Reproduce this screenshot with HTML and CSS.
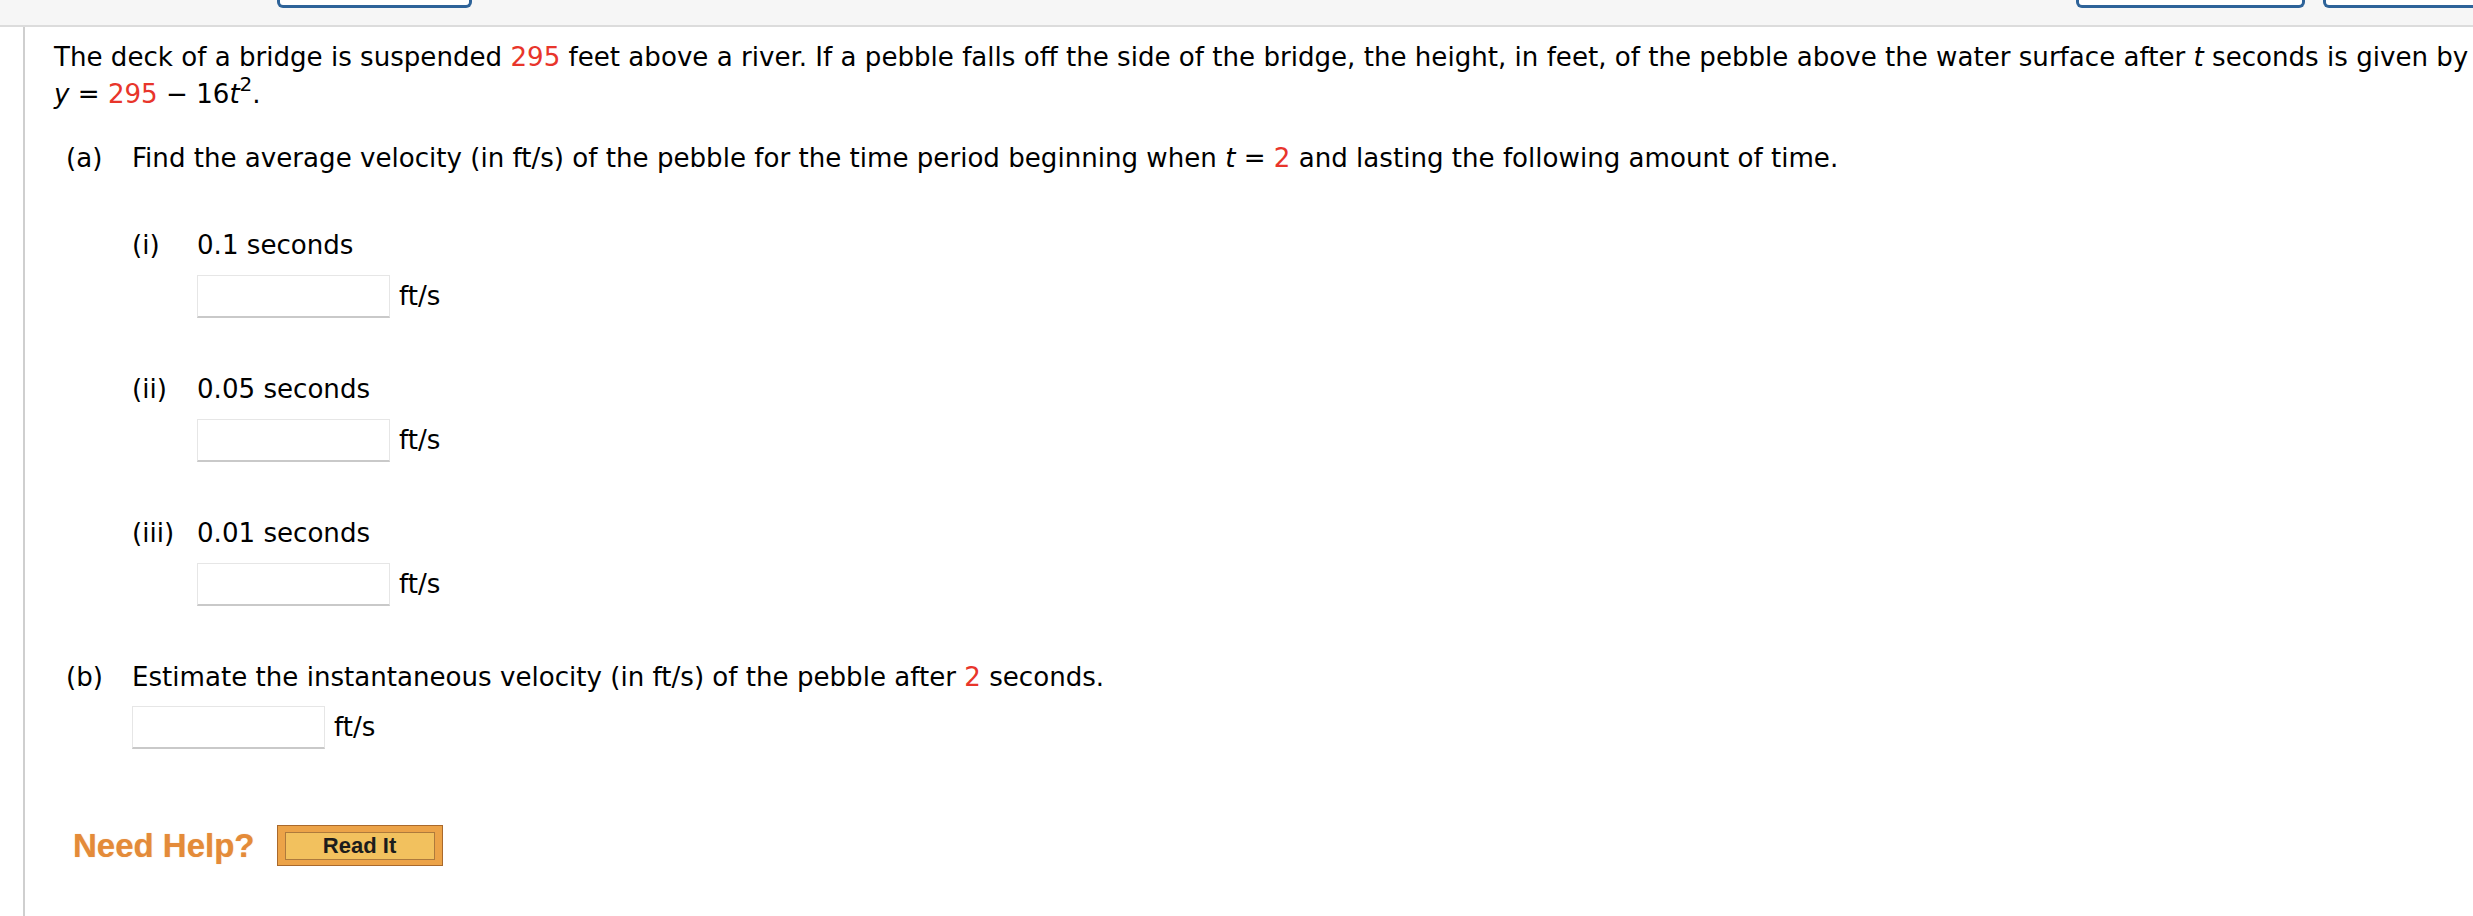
FILE: index.html
```html
<!DOCTYPE html>
<html>
<head>
<meta charset="utf-8">
<link rel="stylesheet" href="styles.css">
</head>
<body>
<div class="topbar">
  <div class="tab tab-1"></div>
  <div class="tab tab-2"></div>
  <div class="tab tab-3"></div>
</div>
<div class="main">
  <p class="stem">The deck of a bridge is suspended <span class="red">295</span> feet above a river. If a pebble falls off the side of the bridge, the height, in feet, of the pebble above the water surface after <i>t</i> seconds is given by<br><i>y</i> = <span class="red">295</span> &minus; 16<i>t</i><sup>2</sup>.</p>

  <div class="part">
    <div class="plabel">(a)</div>
    <div class="pbody">
      <div class="ptext">Find the average velocity (in ft/s) of the pebble for the time period beginning when <i>t</i> = <span class="red">2</span> and lasting the following amount of time.</div>
      <div class="sub first">
        <div class="slabel">(i)</div>
        <div class="sbody">
          <div class="stext">0.1 seconds</div>
          <div class="answer"><span class="box"></span><span class="unit">ft/s</span></div>
        </div>
      </div>
      <div class="sub">
        <div class="slabel">(ii)</div>
        <div class="sbody">
          <div class="stext">0.05 seconds</div>
          <div class="answer"><span class="box"></span><span class="unit">ft/s</span></div>
        </div>
      </div>
      <div class="sub">
        <div class="slabel">(iii)</div>
        <div class="sbody">
          <div class="stext">0.01 seconds</div>
          <div class="answer"><span class="box"></span><span class="unit">ft/s</span></div>
        </div>
      </div>
    </div>
  </div>

  <div class="part part-b">
    <div class="plabel">(b)</div>
    <div class="pbody">
      <div class="ptext">Estimate the instantaneous velocity (in ft/s) of the pebble after <span class="red">2</span> seconds.</div>
      <div class="answer"><span class="box"></span><span class="unit">ft/s</span></div>
    </div>
  </div>

  <div class="help">
    <span class="help-text">Need Help?</span>
    <span class="read-btn"><span class="read-inner">Read It</span></span>
  </div>
</div>
</body>
</html>
```
FILE: styles.css
```css
html, body {
  margin: 0;
  padding: 0;
  background: #ffffff;
}
body {
  font-family: "DejaVu Sans", Verdana, sans-serif;
  font-size: 26.1px;
  color: #000;
  overflow: hidden;
  height: 916px;
}
.topbar {
  height: 25px;
  background: #f6f6f6;
  border-bottom: 2px solid #dcdcdc;
  display: flex;
  align-items: flex-start;
  overflow: hidden;
}
.tab {
  box-sizing: border-box;
  height: 8px;
  border: 3px solid #2e6399;
  border-top: none;
  border-radius: 0 0 6px 6px;
  background: #ffffff;
  flex: none;
}
.tab-1 { margin-left: 277px; width: 195px; }
.tab-2 { margin-left: 1604px; width: 229px; }
.tab-3 { margin-left: 18px; width: 220px; }

.main {
  margin-left: 23px;
  border-left: 2px solid #cfcfcf;
  padding: 12px 0 0 29px;
  height: 877px;
  line-height: 37px;
}
.stem {
  margin: 0;
  white-space: nowrap;
}
.stem sup {
  font-size: 20px;
  line-height: 0;
  vertical-align: 12px;
}
.red { color: #e8352b; }
i { font-style: italic; }

.part {
  display: grid;
  grid-template-columns: 66px 1fr;
  padding-left: 12px;
  margin-top: 27px;
}
.ptext { white-space: nowrap; }
.sub {
  display: grid;
  grid-template-columns: 65px 1fr;
  margin-top: 53px;
}
.sub.first { margin-top: 50px; }
.answer {
  display: flex;
  align-items: center;
  margin-top: 11px;
}
.box {
  display: block;
  box-sizing: border-box;
  width: 193px;
  height: 43px;
  border: 1px solid #e6e6e6;
  border-bottom: 2px solid #c9c9c9;
  background: #fff;
}
.unit {
  margin-left: 9px;
}
.part-b {
  margin-top: 53px;
}
.part-b .answer { margin-top: 10px; }

.help {
  display: flex;
  align-items: center;
  margin-top: 76px;
  padding-left: 19px;
  height: 41px;
}
.help-text {
  font-family: "Liberation Sans", Arial, sans-serif;
  font-weight: bold;
  font-size: 33px;
  color: #e48b39;
  text-shadow: 0 0 1px rgba(228, 139, 57, 0.6);
  line-height: 41px;
}
.read-btn {
  display: block;
  box-sizing: border-box;
  width: 166px;
  height: 41px;
  margin-left: 22px;
  border: 1px solid #a9692c;
  background: #eca348;
  padding: 6px 7px 5px 7px;
}
.read-inner {
  display: flex;
  align-items: center;
  justify-content: center;
  box-sizing: border-box;
  height: 100%;
  border: 1px solid #ae7a3c;
  background: #f2c15e;
  font-family: "Liberation Sans", Arial, sans-serif;
  font-weight: bold;
  font-size: 22px;
  color: #1c1c1c;
  line-height: 1;
}
```
